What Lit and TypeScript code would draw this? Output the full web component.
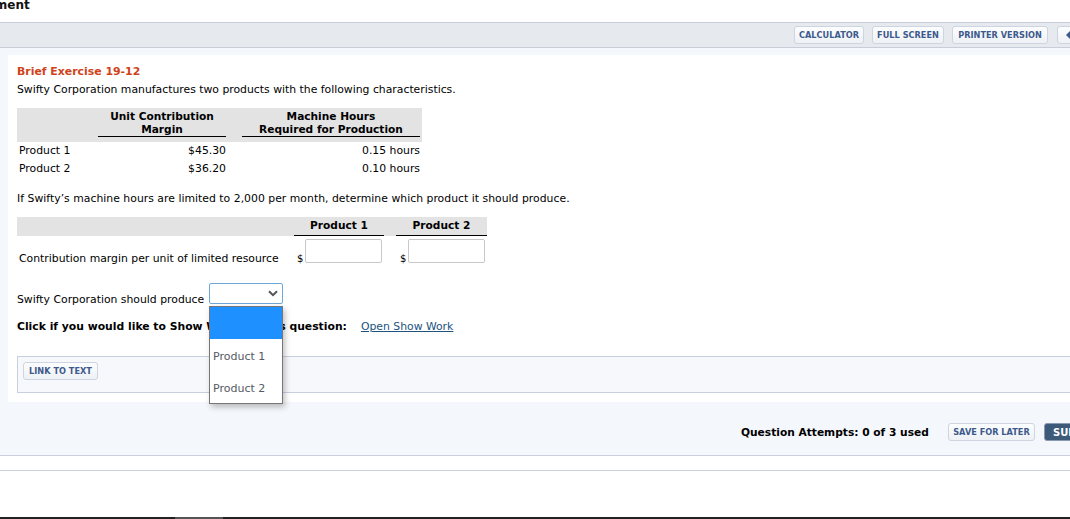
import { LitElement, html, css } from "lit";
import { customElement } from "lit/decorators.js";

@customElement("app-root")
export class AppRoot extends LitElement {
  static styles = css`
    :host {
      display: block;
      height: 519px;
      overflow: hidden;
      position: relative;
      background: #fff;
      color: #000;
      font: 10.83px/13px "DejaVu Sans", Verdana, sans-serif;
    }
    .b { font-weight: 700; font-size: 10.8px; }
    .title {
      height: 22px;
      margin-left: -50px;
      font-size: 12px;
      font-weight: 700;
      line-height: 11px;
      color: #111;
    }
    .toolbar {
      box-sizing: border-box;
      height: 26px;
      background: #e6e9ed;
      border-top: 1px solid #c8ced8;
      border-bottom: 1px solid #c8ced8;
      display: flex;
      align-items: center;
      gap: 8px;
      padding-left: 794px;
      white-space: nowrap;
    }
    .btn {
      box-sizing: border-box;
      flex: none;
      height: 18px;
      display: flex;
      align-items: center;
      justify-content: center;
      border: 1px solid #ced5e0;
      border-radius: 3px;
      background: linear-gradient(#fcfdfe, #eef1f5);
      color: #3d5a8c;
      font-size: 8.2px;
      font-weight: 700;
      white-space: nowrap;
    }
    .panel {
      height: 408px;
      box-sizing: border-box;
      padding-top: 7px;
      background: #f4f7fb;
      border-bottom: 1px solid #ccd0dc;
    }
    .content {
      box-sizing: border-box;
      height: 347px;
      margin-left: 8px;
      padding: 10px 0 0 9px;
      background: #fff;
      position: relative;
    }
    .heading {
      color: #cf421a;
      font-weight: 700;
      font-size: 10.9px;
      height: 18px;
    }
    .para { height: 25px; }
    .t1 {
      display: grid;
      grid-template-columns: 81px 128px 16px 178px 2px;
      width: 405px;
    }
    .t1 .head {
      grid-column: 1 / -1;
      display: grid;
      grid-template-columns: subgrid;
      height: 34px;
      background: #e3e3e3;
      align-items: start;
    }
    .t1 .hc {
      height: 29px;
      box-sizing: border-box;
      border-bottom: 1px solid #000;
      text-align: center;
      font-weight: 700;
      font-size: 10.6px;
      padding-top: 2px;
    }
    .t1 .row {
      grid-column: 1 / -1;
      display: grid;
      grid-template-columns: subgrid;
      height: 18px;
      line-height: 18px;
    }
    .r { text-align: right; }
    .lbl { padding-left: 2px; }
    .if { margin-top: 14px; height: 25px; letter-spacing: 0.02px; }
    .t2 { width: 470px; }
    .t2 .head {
      height: 19px;
      background: #e3e3e3;
      display: flex;
      padding-left: 277px;
      gap: 12px;
    }
    .t2 .hc {
      box-sizing: border-box;
      height: 19px;
      border-bottom: 1px solid #000;
      text-align: center;
      font-weight: 700;
      font-size: 10.6px;
      line-height: 17px;
    }
    .t2 .hc.a { width: 90px; }
    .t2 .hc.c { width: 91px; }
    .t2 .row {
      display: flex;
      align-items: flex-end;
      height: 29px;
      padding-left: 2px;
    }
    .t2 .name { flex: none; width: 278px; }
    .t2 .cur { flex: none; width: 103px; display: flex; align-items: flex-end; }
    .dollar { width: 8px; font-size: 10px; line-height: 12px; }
    .input {
      box-sizing: border-box;
      width: 77px;
      height: 24px;
      margin-bottom: 2px;
      border: 1px solid #c8c8c8;
      border-radius: 2px;
      background: #fff;
    }
    .choose {
      margin-top: 15px;
      display: flex;
      align-items: flex-end;
      gap: 5px;
      height: 24px;
    }
    .choose span { margin-bottom: -2px; }
    .select {
      box-sizing: border-box;
      width: 74px;
      height: 21px;
      border: 1px solid #6ea8d8;
      border-radius: 2px;
      background: #fff;
      display: flex;
      align-items: center;
      justify-content: flex-end;
      padding-right: 4px;
    }
    .show {
      margin-top: 16px;
      display: flex;
      gap: 14px;
      height: 13px;
      white-space: pre;
    }
    .show a {
      color: #20527e;
      text-decoration: underline;
    }
    .linkbox {
      box-sizing: border-box;
      margin: 23px -100px 0 0;
      height: 37px;
      padding: 5px;
      background: #f6f8fb;
      border: 1px solid #c8d0e0;
    }
    .linkbox .btn { width: 75px; }
    .menu {
      position: absolute;
      left: 201px;
      top: 251px;
      box-sizing: border-box;
      width: 74px;
      height: 98px;
      background: #fff;
      border: 1px solid #767676;
      box-shadow: 2px 3px 6px rgba(0, 0, 0, 0.25);
      color: #555a66;
    }
    .menu div {
      height: 32px;
      line-height: 36px;
      padding-left: 3px;
      font-size: 11px;
    }
    .menu .sel { background: #1e90ff; }
    .foot {
      position: absolute;
      left: 741px;
      top: 423px;
      display: flex;
      align-items: center;
      height: 18px;
      white-space: nowrap;
    }
    .foot .qa { font-weight: 700; font-size: 10.65px; width: 207px; padding-top: 1px; }
    .submit {
      margin-left: 9px;
      width: 60px;
      justify-content: flex-start;
      padding-left: 8px;
      background: #3d5a78;
      border-color: #8a9ab0;
      color: #fff;
      font-size: 10px;
    }
    .line {
      height: 14px;
      border-bottom: 1px solid #ccd0dc;
    }
    .scroll {
      position: absolute;
      left: 0;
      right: 0;
      bottom: 0;
      height: 2px;
      background: #222;
    }
    .scroll i {
      display: block;
      margin-left: 175px;
      width: 48px;
      height: 2px;
      background: #555;
    }
  `;

  render() {
    return html`
      <div class="title">Assignment</div>
      <div class="toolbar">
        <div class="btn" style="width:70px">CALCULATOR</div>
        <div class="btn" style="width:72px">FULL SCREEN</div>
        <div class="btn" style="width:96px">PRINTER VERSION</div>
        <div class="btn" style="width:40px;justify-content:flex-start;padding-left:8px;margin-left:1px">
          <svg width="9" height="8" viewBox="0 0 9 8"><path d="M0 4 4 0v2h5v4H4v2z" fill="#3d5a8c" /></svg>
        </div>
      </div>
      <div class="panel">
        <div class="content">
          <div class="heading">Brief Exercise 19-12</div>
          <div class="para">Swifty Corporation manufactures two products with the following characteristics.</div>
          <div class="t1">
            <div class="head">
              <div></div>
              <div class="hc">Unit Contribution<br />Margin</div>
              <div></div>
              <div class="hc">Machine Hours<br />Required for Production</div>
              <div></div>
            </div>
            <div class="row">
              <div class="lbl">Product 1</div>
              <div class="r">$45.30</div>
              <div></div>
              <div class="r">0.15 hours</div>
              <div></div>
            </div>
            <div class="row">
              <div class="lbl">Product 2</div>
              <div class="r">$36.20</div>
              <div></div>
              <div class="r">0.10 hours</div>
              <div></div>
            </div>
          </div>
          <div class="if">If Swifty’s machine hours are limited to 2,000 per month, determine which product it should produce.</div>
          <div class="t2">
            <div class="head">
              <div class="hc a">Product 1</div>
              <div class="hc c">Product 2</div>
            </div>
            <div class="row">
              <div class="name">Contribution margin per unit of limited resource</div>
              <div class="cur"><span class="dollar">$</span><div class="input"></div></div>
              <div class="cur"><span class="dollar">$</span><div class="input"></div></div>
            </div>
          </div>
          <div class="choose">
            <span>Swifty Corporation should produce</span>
            <div class="select">
              <svg width="10" height="7" viewBox="0 0 10 7">
                <path d="M1 1.2 5 5.2 9 1.2" fill="none" stroke="#555" stroke-width="2" />
              </svg>
            </div>
          </div>
          <div class="show">
            <span class="b">Click if you would like to Show Work for this question:</span>
            <a href="#">Open Show Work</a>
          </div>
          <div class="linkbox"><div class="btn">LINK TO TEXT</div></div>
          <div class="menu">
            <div class="sel"></div>
            <div>Product 1</div>
            <div>Product 2</div>
          </div>
        </div>
      </div>
      <div class="foot">
        <span class="qa">Question Attempts: 0 of 3 used</span>
        <div class="btn" style="width:87px">SAVE FOR LATER</div>
        <div class="btn submit">SUBMIT</div>
      </div>
      <div class="line"></div>
      <div class="scroll"><i></i></div>
    `;
  }
}
